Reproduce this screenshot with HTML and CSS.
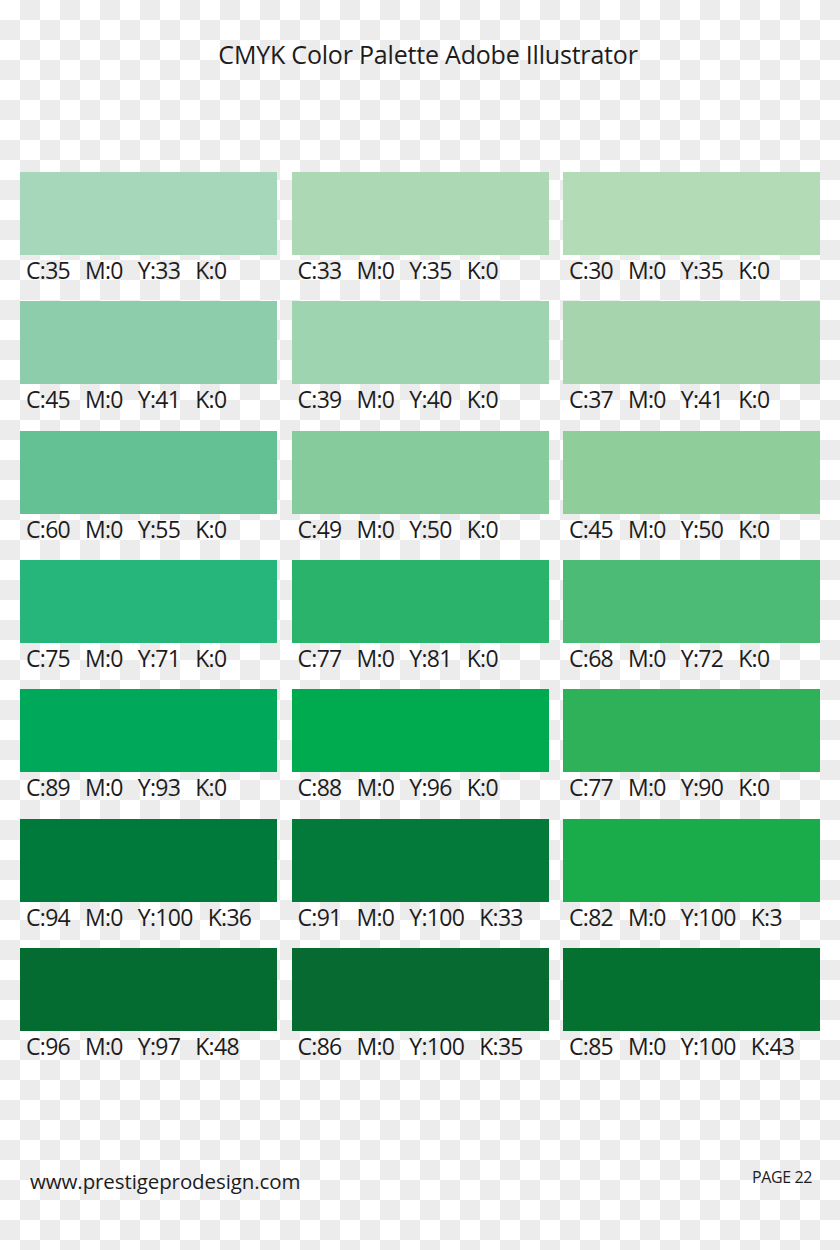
FILE: index.html
```html
<!DOCTYPE html>
<html lang="en">
<head>
  <meta charset="UTF-8" />
  <meta name="viewport" content="width=device-width, initial-scale=1.0"/>
  <title>CMYK Color Palette Adobe Illustrator</title>
  <link rel="stylesheet" href="styles.css">
</head>
<body>
  <div class="page">
    <h1 class="title">CMYK Color Palette Adobe Illustrator</h1>

    <div class="palette">
      <div class="chip"><div class="swatch" style="background:#a6d7ba"></div><div class="label"><span>C:35</span><span>M:0</span><span>Y:33</span><span>K:0</span></div></div>
      <div class="chip"><div class="swatch" style="background:#acd8b4"></div><div class="label"><span>C:33</span><span>M:0</span><span>Y:35</span><span>K:0</span></div></div>
      <div class="chip"><div class="swatch" style="background:#b3dbb6"></div><div class="label"><span>C:30</span><span>M:0</span><span>Y:35</span><span>K:0</span></div></div>

      <div class="chip"><div class="swatch" style="background:#8ecdab"></div><div class="label"><span>C:45</span><span>M:0</span><span>Y:41</span><span>K:0</span></div></div>
      <div class="chip"><div class="swatch" style="background:#9fd4b0"></div><div class="label"><span>C:39</span><span>M:0</span><span>Y:40</span><span>K:0</span></div></div>
      <div class="chip"><div class="swatch" style="background:#a6d5ad"></div><div class="label"><span>C:37</span><span>M:0</span><span>Y:41</span><span>K:0</span></div></div>

      <div class="chip"><div class="swatch" style="background:#64c194"></div><div class="label"><span>C:60</span><span>M:0</span><span>Y:55</span><span>K:0</span></div></div>
      <div class="chip"><div class="swatch" style="background:#86cb9b"></div><div class="label"><span>C:49</span><span>M:0</span><span>Y:50</span><span>K:0</span></div></div>
      <div class="chip"><div class="swatch" style="background:#8fcd9b"></div><div class="label"><span>C:45</span><span>M:0</span><span>Y:50</span><span>K:0</span></div></div>

      <div class="chip"><div class="swatch" style="background:#26b57b"></div><div class="label"><span>C:75</span><span>M:0</span><span>Y:71</span><span>K:0</span></div></div>
      <div class="chip"><div class="swatch" style="background:#29b36b"></div><div class="label"><span>C:77</span><span>M:0</span><span>Y:81</span><span>K:0</span></div></div>
      <div class="chip"><div class="swatch" style="background:#4bbb76"></div><div class="label"><span>C:68</span><span>M:0</span><span>Y:72</span><span>K:0</span></div></div>

      <div class="chip"><div class="swatch" style="background:#00a85a"></div><div class="label"><span>C:89</span><span>M:0</span><span>Y:93</span><span>K:0</span></div></div>
      <div class="chip"><div class="swatch" style="background:#00aa4f"></div><div class="label"><span>C:88</span><span>M:0</span><span>Y:96</span><span>K:0</span></div></div>
      <div class="chip"><div class="swatch" style="background:#2eb159"></div><div class="label"><span>C:77</span><span>M:0</span><span>Y:90</span><span>K:0</span></div></div>

      <div class="chip"><div class="swatch" style="background:#007a3a"></div><div class="label"><span>C:94</span><span>M:0</span><span>Y:100</span><span>K:36</span></div></div>
      <div class="chip"><div class="swatch" style="background:#03793a"></div><div class="label"><span>C:91</span><span>M:0</span><span>Y:100</span><span>K:33</span></div></div>
      <div class="chip"><div class="swatch" style="background:#1aab4b"></div><div class="label"><span>C:82</span><span>M:0</span><span>Y:100</span><span>K:3</span></div></div>

      <div class="chip"><div class="swatch" style="background:#046b31"></div><div class="label"><span>C:96</span><span>M:0</span><span>Y:97</span><span>K:48</span></div></div>
      <div class="chip"><div class="swatch" style="background:#076a31"></div><div class="label"><span>C:86</span><span>M:0</span><span>Y:100</span><span>K:35</span></div></div>
      <div class="chip"><div class="swatch" style="background:#057131"></div><div class="label"><span>C:85</span><span>M:0</span><span>Y:100</span><span>K:43</span></div></div>
    </div>

    <footer class="footer">
      <span class="site">www.prestigeprodesign.com</span>
      <span class="page-num">PAGE 22</span>
    </footer>
  </div>
</body>
</html>
```

FILE: styles.css
```css
html, body {
  margin: 0;
  padding: 0;
}

body {
  font-family: 'Open Sans', 'Noto Sans', sans-serif;
  color: #1e1c1d;
  background: repeating-conic-gradient(#ececec 0 25%, #ffffff 0 50%) 0 0 / 40px 40px;
}

.page {
  width: 840px;
  min-height: 1250px;
  display: flex;
  flex-direction: column;
}

.title {
  margin: 0;
  padding-top: 38px;
  padding-left: 16px;
  font-size: 25px;
  font-weight: 400;
  line-height: 32px;
  letter-spacing: -0.2px;
  text-align: center;
}

.palette {
  margin-top: 102px;
  padding: 0 20px;
  display: grid;
  grid-template-columns: repeat(3, 257px);
  column-gap: 14.5px;
  row-gap: 16.33px;
}

.swatch {
  height: 83px;
}

.label {
  height: 30px;
  display: flex;
  align-items: center;
  gap: 15px;
  padding-left: 6px;
  padding-top: 1px;
  box-sizing: border-box;
  font-size: 23px;
  letter-spacing: -0.7px;
  line-height: 1;
}

.footer {
  margin-top: 107px;
  padding: 0 28px 0 30px;
  display: flex;
  justify-content: space-between;
  align-items: flex-start;
}

.site {
  font-size: 20.5px;
  line-height: 26px;
  letter-spacing: -0.1px;
}

.page-num {
  font-size: 16px;
  line-height: 18px;
  letter-spacing: -0.4px;
}
```
